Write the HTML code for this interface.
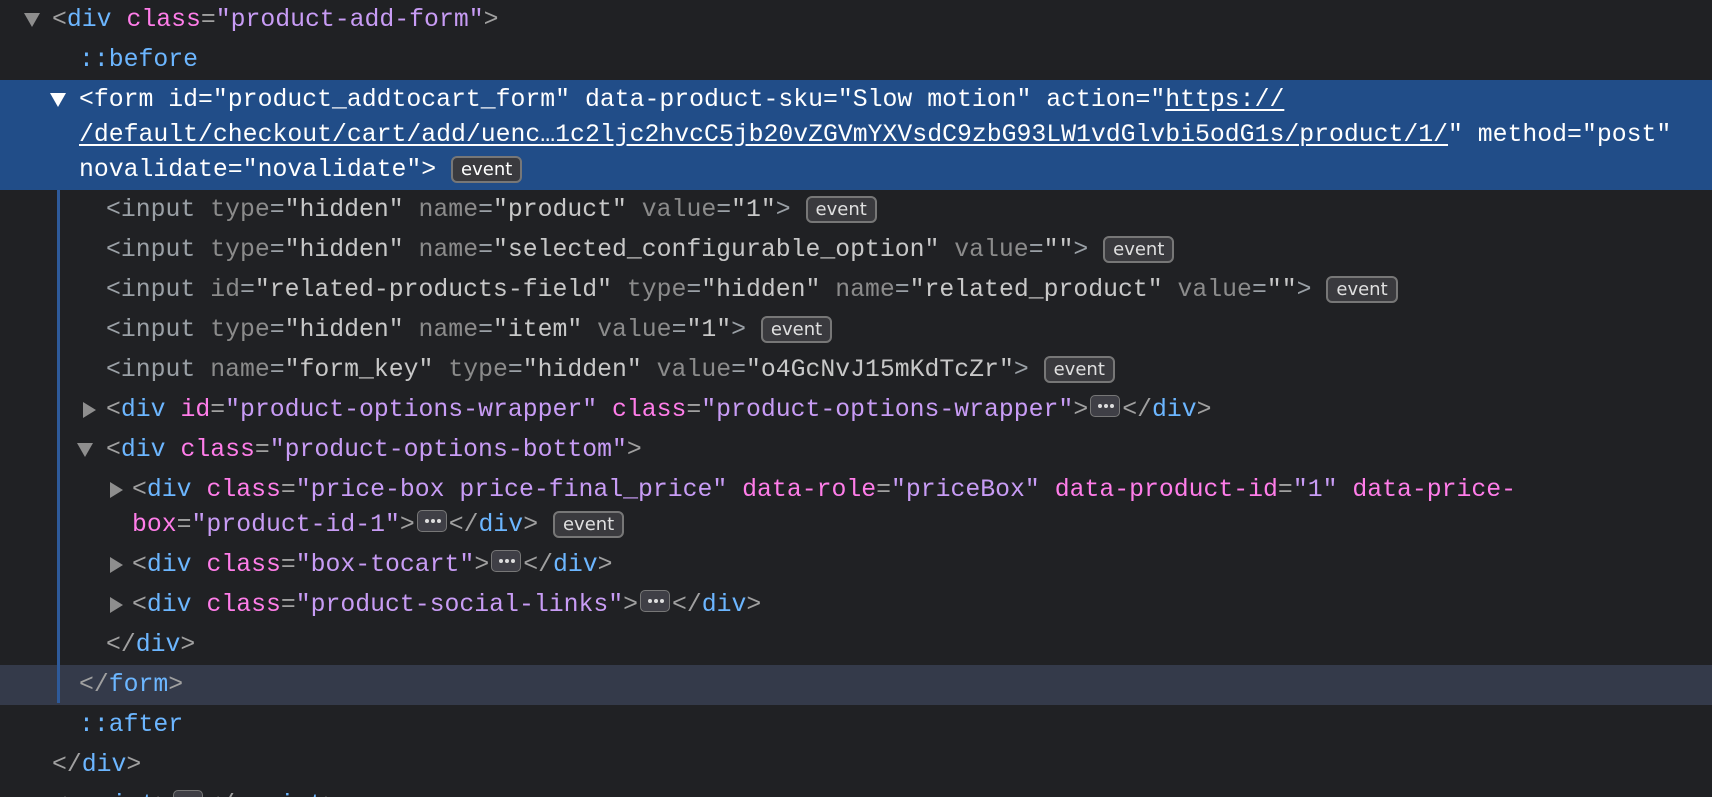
<!DOCTYPE html>
<html><head><meta charset="utf-8"><style>
html,body{margin:0;padding:0;background:#202124;width:1712px;height:797px;overflow:hidden}
body{font-family:"Liberation Mono",monospace;font-size:24.8px;color:#e8e8e8}
#c{position:relative;top:0px}
.r{position:relative;line-height:35px;padding:2.5px 0;white-space:pre}
.t{color:#6cb6ff}.b{color:#a0a0a0}.a{color:#ff7de9}.v{color:#c89cf5}
.dim .t,.dim .b{color:#9aa0a6}.dim .a{color:#8b8b8b}.dim .v{color:#c8c8c8}
.sel{background:#214d88}.sel span{color:#fff!important}
.hov{background:#343a4a}
.tri{position:absolute;width:0;height:0}
.dn{border-left:8px solid transparent;border-right:8px solid transparent;border-top:14px solid #8e8e8e;top:13px}
.rt{border-top:8px solid transparent;border-bottom:8px solid transparent;border-left:13px solid #8e8e8e;top:12px}
.sel .dn{border-top-color:#fff}
.ev{display:inline-block;line-height:23px;padding:0 8px;border:2px solid #777;border-radius:6px;background:#3a3a3e;color:#e0e0e0!important;vertical-align:1px;font-family:"DejaVu Sans","Liberation Sans",sans-serif;font-size:18px}
.el{display:inline-block;width:28px;height:20px;border:1.5px solid #777;border-radius:5px;background:#3f3f46;vertical-align:-1px;position:relative;margin:0 2px}
.el:after{content:"";position:absolute;left:7px;top:8px;width:4px;height:4px;border-radius:2px;background:#ddd;box-shadow:6px 0 #ddd,12px 0 #ddd}
u{text-decoration:underline;text-underline-offset:3px}
#bar{position:absolute;left:57px;top:190px;width:3px;height:513px;background:#2e5a9a}
</style></head><body><div id="c">
<div class="r" style="padding-left:52px"><i class="tri dn" style="left:24px"></i><span class="b">&lt;</span><span class="t">div</span> <span class="a">class</span><span class="b">=</span><span class="v">"product-add-form"</span><span class="b">&gt;</span></div>
<div class="r" style="padding-left:79px"><span class="t">::before</span></div>
<div class="r sel" style="padding-left:79px"><i class="tri dn" style="left:50px"></i><span>&lt;form id="product_addtocart_form" data-product-sku="Slow motion" action="<u>https://</u>
<u>/default/checkout/cart/add/uenc…1c2ljc2hvcC5jb20vZGVmYXVsdC9zbG93LW1vdGlvbi5odG1s/product/1/</u>" method="post"
novalidate="novalidate"&gt;</span> <span class="ev">event</span></div>
<div class="r dim" style="padding-left:106px"><span class="b">&lt;input</span> <span class="a">type</span><span class="b">=</span><span class="v">"hidden"</span> <span class="a">name</span><span class="b">=</span><span class="v">"product"</span> <span class="a">value</span><span class="b">=</span><span class="v">"1"</span><span class="b">&gt;</span> <span class="ev">event</span></div>
<div class="r dim" style="padding-left:106px"><span class="b">&lt;input</span> <span class="a">type</span><span class="b">=</span><span class="v">"hidden"</span> <span class="a">name</span><span class="b">=</span><span class="v">"selected_configurable_option"</span> <span class="a">value</span><span class="b">=</span><span class="v">""</span><span class="b">&gt;</span> <span class="ev">event</span></div>
<div class="r dim" style="padding-left:106px"><span class="b">&lt;input</span> <span class="a">id</span><span class="b">=</span><span class="v">"related-products-field"</span> <span class="a">type</span><span class="b">=</span><span class="v">"hidden"</span> <span class="a">name</span><span class="b">=</span><span class="v">"related_product"</span> <span class="a">value</span><span class="b">=</span><span class="v">""</span><span class="b">&gt;</span> <span class="ev">event</span></div>
<div class="r dim" style="padding-left:106px"><span class="b">&lt;input</span> <span class="a">type</span><span class="b">=</span><span class="v">"hidden"</span> <span class="a">name</span><span class="b">=</span><span class="v">"item"</span> <span class="a">value</span><span class="b">=</span><span class="v">"1"</span><span class="b">&gt;</span> <span class="ev">event</span></div>
<div class="r dim" style="padding-left:106px"><span class="b">&lt;input</span> <span class="a">name</span><span class="b">=</span><span class="v">"form_key"</span> <span class="a">type</span><span class="b">=</span><span class="v">"hidden"</span> <span class="a">value</span><span class="b">=</span><span class="v">"o4GcNvJ15mKdTcZr"</span><span class="b">&gt;</span> <span class="ev">event</span></div>
<div class="r" style="padding-left:106px"><i class="tri rt" style="left:83px"></i><span class="b">&lt;</span><span class="t">div</span> <span class="a">id</span><span class="b">=</span><span class="v">"product-options-wrapper"</span> <span class="a">class</span><span class="b">=</span><span class="v">"product-options-wrapper"</span><span class="b">&gt;</span><span class="el"></span><span class="b">&lt;/</span><span class="t">div</span><span class="b">&gt;</span></div>
<div class="r" style="padding-left:106px"><i class="tri dn" style="left:77px"></i><span class="b">&lt;</span><span class="t">div</span> <span class="a">class</span><span class="b">=</span><span class="v">"product-options-bottom"</span><span class="b">&gt;</span></div>
<div class="r" style="padding-left:132px"><i class="tri rt" style="left:110px"></i><span class="b">&lt;</span><span class="t">div</span> <span class="a">class</span><span class="b">=</span><span class="v">"price-box price-final_price"</span> <span class="a">data-role</span><span class="b">=</span><span class="v">"priceBox"</span> <span class="a">data-product-id</span><span class="b">=</span><span class="v">"1"</span> <span class="a">data-price-</span>
<span class="a">box</span><span class="b">=</span><span class="v">"product-id-1"</span><span class="b">&gt;</span><span class="el"></span><span class="b">&lt;/</span><span class="t">div</span><span class="b">&gt;</span> <span class="ev">event</span></div>
<div class="r" style="padding-left:132px"><i class="tri rt" style="left:110px"></i><span class="b">&lt;</span><span class="t">div</span> <span class="a">class</span><span class="b">=</span><span class="v">"box-tocart"</span><span class="b">&gt;</span><span class="el"></span><span class="b">&lt;/</span><span class="t">div</span><span class="b">&gt;</span></div>
<div class="r" style="padding-left:132px"><i class="tri rt" style="left:110px"></i><span class="b">&lt;</span><span class="t">div</span> <span class="a">class</span><span class="b">=</span><span class="v">"product-social-links"</span><span class="b">&gt;</span><span class="el"></span><span class="b">&lt;/</span><span class="t">div</span><span class="b">&gt;</span></div>
<div class="r" style="padding-left:106px"><span class="b">&lt;/</span><span class="t">div</span><span class="b">&gt;</span></div>
<div class="r hov" style="padding-left:79px"><span class="b">&lt;/</span><span class="t">form</span><span class="b">&gt;</span></div>
<div class="r" style="padding-left:79px"><span class="t">::after</span></div>
<div class="r" style="padding-left:52px"><span class="b">&lt;/</span><span class="t">div</span><span class="b">&gt;</span></div>
<div class="r" style="padding-left:52px"><i class="tri rt" style="left:26px"></i><span class="b">&lt;</span><span class="t">script</span><span class="b">&gt;</span><span class="el"></span><span class="b">&lt;/</span><span class="t">script</span><span class="b">&gt;</span></div>
</div><div id="bar"></div></body></html>
